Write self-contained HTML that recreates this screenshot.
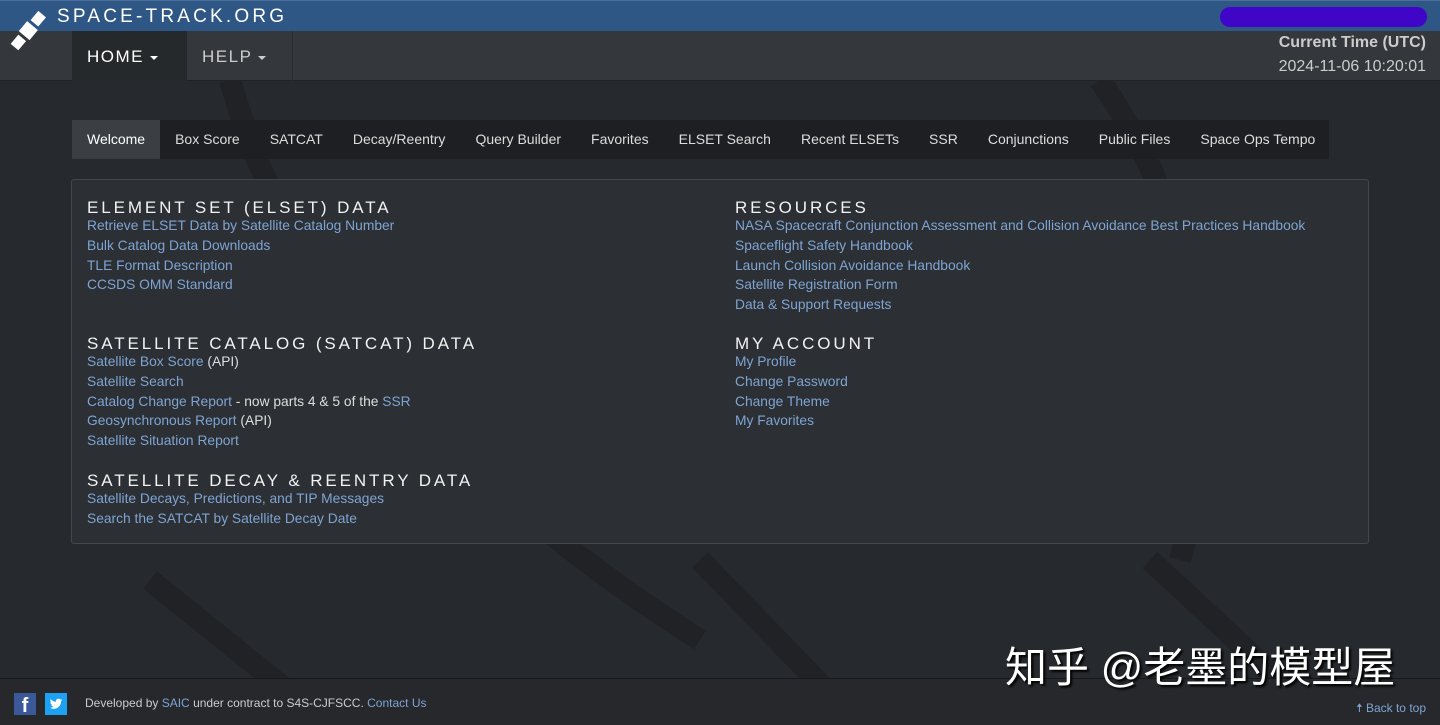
<!DOCTYPE html>
<html><head><meta charset="utf-8"><style>
*{margin:0;padding:0;box-sizing:border-box}
body{width:1440px;height:725px;overflow:hidden;background:#26292d;font-family:"Liberation Sans",Arial,sans-serif;position:relative;color:#ddd}
.top{position:absolute;left:0;top:0;width:1440px;height:31px;background:#2f5786;border-top:1px solid #4a6f9a}
.brand{position:absolute;left:57px;top:5px;font-size:19px;color:#fff;letter-spacing:3.2px;font-weight:normal}
.redact{position:absolute;left:1220px;top:6px;width:207px;height:20px;background:#3f06c8;border-radius:10px}
.nav{position:absolute;left:0;top:31px;width:1440px;height:50px;background:#34373b;border-bottom:1px solid #202225}
.nav .home{position:absolute;left:72px;top:0;width:115px;height:50px;background:#26292c;color:#fff;font-size:17px;letter-spacing:1.5px;padding:16px 0 0 15px}
.nav .help{position:absolute;left:187px;top:0;width:106px;height:50px;border-right:1px solid #2a2c2f;color:#ccc;font-size:17px;letter-spacing:1.5px;padding:16px 0 0 15px}
.caret{display:inline-block;width:0;height:0;border-left:4px solid transparent;border-right:4px solid transparent;border-top:4px solid currentColor;vertical-align:middle;margin-left:6px}
.time{position:absolute;right:14px;top:31px;text-align:right;color:#ccc;font-size:16px;line-height:24px}
.time b{font-weight:bold}
.tabs{position:absolute;left:72px;top:120px;height:39px;width:1257px;background:#1d1f22;display:flex;white-space:nowrap}
.tabs div{padding:0 15px;line-height:39px;font-size:14px;color:#ddd}
.tabs .act{background:#3b3f44;color:#fff}
.panel{position:absolute;left:71px;top:179px;width:1298px;height:365px;background:#2c2f33;border:1px solid #43464a;border-radius:3px}
h3{position:absolute;font-weight:normal;font-size:17px;letter-spacing:2.9px;color:#f2f2f2;line-height:20px;white-space:nowrap}
.l{position:absolute;font-size:13.8px;line-height:19.8px;color:#ddd;white-space:nowrap}
.l a{color:#7ea4d3;text-decoration:none}
.foot{position:absolute;left:0;top:678px;width:1440px;height:47px;background:#26282c;border-top:1px solid #17181a}
.fb{position:absolute;left:14px;top:693px;width:22px;height:22px;background:#3b5998;color:#fff;font-weight:bold;font-size:20px;text-align:center;line-height:26px}
.tw{position:absolute;left:45px;top:693px;width:22px;height:22px;background:#1da1f2}
.ftxt{position:absolute;left:85px;top:696px;font-size:12px;color:#ccc}
.ftxt a,.btt{color:#7ea4d3}
.btt{position:absolute;right:14px;top:699px;font-size:12px}
.zh{position:absolute;left:1005px;top:634px;font-family:"Liberation Sans","Noto Sans CJK SC",sans-serif;font-size:42px;color:#fff;text-shadow:2px 2px 2px #000;white-space:nowrap}
</style></head><body>
<svg style="position:absolute;left:0;top:0" width="1440" height="725">
<g fill="none" stroke="#1f2124" stroke-width="22" opacity=".8">
<path d="M230 80 Q320 400 700 640"/>
<path d="M1100 80 Q1250 300 1180 560"/>
<path d="M700 560 L860 725"/>
<path d="M150 580 L330 725"/>
<path d="M1150 560 L1290 690"/>
</g>
</svg>
<div class="top"><div class="brand">SPACE-TRACK.ORG</div><div class="redact"></div></div>
<div class="nav"><div class="home">HOME<span class="caret"></span></div><div class="help">HELP<span class="caret"></span></div></div>
<svg style="position:absolute;left:4px;top:6px;z-index:5" width="48" height="50" viewBox="-4 -4 48 50"><g fill="#fff" transform="rotate(40 20 21)"><rect x="15" y="-1" width="10" height="12"/><rect x="13" y="14" width="14" height="13"/><rect x="15" y="30" width="10" height="12"/></g></svg>
<div class="time"><b>Current Time (UTC)</b><br>2024-11-06 10:20:01</div>
<div class="tabs"><div class="act">Welcome</div><div>Box Score</div><div>SATCAT</div><div>Decay/Reentry</div><div>Query Builder</div><div>Favorites</div><div>ELSET Search</div><div>Recent ELSETs</div><div>SSR</div><div>Conjunctions</div><div>Public Files</div><div>Space Ops Tempo</div></div>
<div class="panel"></div>
<h3 style="left:87px;top:198px">ELEMENT SET (ELSET) DATA</h3>
<div class="l" style="left:87px;top:216px"><a>Retrieve ELSET Data by Satellite Catalog Number</a><br><a>Bulk Catalog Data Downloads</a><br><a>TLE Format Description</a><br><a>CCSDS OMM Standard</a></div>
<h3 style="left:87px;top:334px">SATELLITE CATALOG (SATCAT) DATA</h3>
<div class="l" style="left:87px;top:352px"><a>Satellite Box Score</a> (API)<br><a>Satellite Search</a><br><a>Catalog Change Report</a> - now parts 4 &amp; 5 of the <a>SSR</a><br><a>Geosynchronous Report</a> (API)<br><a>Satellite Situation Report</a></div>
<h3 style="left:87px;top:471px">SATELLITE DECAY &amp; REENTRY DATA</h3>
<div class="l" style="left:87px;top:489px"><a>Satellite Decays, Predictions, and TIP Messages</a><br><a>Search the SATCAT by Satellite Decay Date</a></div>
<h3 style="left:735px;top:198px">RESOURCES</h3>
<div class="l" style="left:735px;top:216px"><a>NASA Spacecraft Conjunction Assessment and Collision Avoidance Best Practices Handbook</a><br><a>Spaceflight Safety Handbook</a><br><a>Launch Collision Avoidance Handbook</a><br><a>Satellite Registration Form</a><br><a>Data &amp; Support Requests</a></div>
<h3 style="left:735px;top:334px">MY ACCOUNT</h3>
<div class="l" style="left:735px;top:352px"><a>My Profile</a><br><a>Change Password</a><br><a>Change Theme</a><br><a>My Favorites</a></div>
<div class="foot"></div>
<div class="fb">f</div>
<div class="tw"><svg width="22" height="22" viewBox="0 0 24 24"><path fill="#fff" d="M19 7.5c-.5.2-1 .4-1.6.4.6-.3 1-.9 1.2-1.5-.5.3-1.1.5-1.8.7a2.8 2.8 0 0 0-4.8 2.5C9.7 9.5 7.6 8.4 6.2 6.7c-.8 1.3-.3 2.9.9 3.7-.5 0-.9-.1-1.3-.3 0 1.4 1 2.6 2.3 2.8-.4.1-.9.1-1.3.1.4 1.1 1.4 1.9 2.6 1.9A5.6 5.6 0 0 1 5.2 16a8 8 0 0 0 12.3-7.1c.6-.4 1.1-.9 1.5-1.4z"/></svg></div>
<div class="ftxt">Developed by <a>SAIC</a> under contract to S4S-CJFSCC. <a>Contact Us</a></div>
<div class="zh">知乎 @老墨的模型屋</div>
<div class="btt">🠅 Back to top</div>
</body></html>
